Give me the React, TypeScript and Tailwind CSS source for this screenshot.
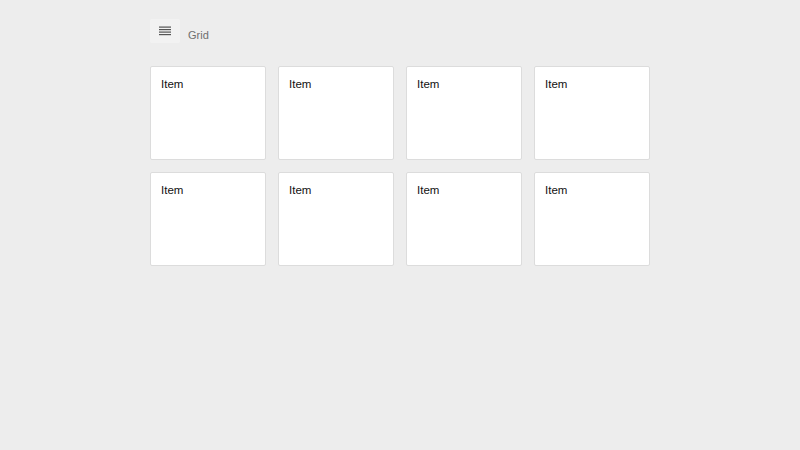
import React from 'react';

const items = Array.from({ length: 8 }, (_, i) => i);

const App: React.FC = () => {
  return (
    <div className="min-h-screen w-full bg-[#ededed] font-['Liberation_Sans',Arial,sans-serif]">
      <div className="w-[500px] mx-auto pt-[19px]">
        {/* Header */}
        <div className="flex items-center h-6">
          <button className="w-[30px] h-[24px] flex items-center justify-center bg-[#f2f2f2] rounded-[2px]">
            <svg width="12" height="10" viewBox="0 0 12 10" fill="none">
              <rect x="0" y="0.5" width="12" height="1.2" fill="#555" />
              <rect x="0" y="3" width="12" height="1.2" fill="#555" />
              <rect x="0" y="5.5" width="12" height="1.2" fill="#555" />
              <rect x="0" y="8" width="12" height="1.2" fill="#555" />
            </svg>
          </button>
          <span className="ml-2 mt-[8px] text-[11px] leading-4 text-[#6f6f6f]">Grid</span>
        </div>

        {/* Cards */}
        <div className="grid grid-cols-4 gap-3 mt-[23px]">
          {items.map((i) => (
            <div
              key={i}
              className="h-[94px] bg-white border border-[#dcdcdc] rounded-[2px] px-[10px] pt-[9px]"
            >
              <p className="text-[11.5px] leading-4 text-[#111]">Item</p>
            </div>
          ))}
        </div>
      </div>
    </div>
  );
};

export default App;
